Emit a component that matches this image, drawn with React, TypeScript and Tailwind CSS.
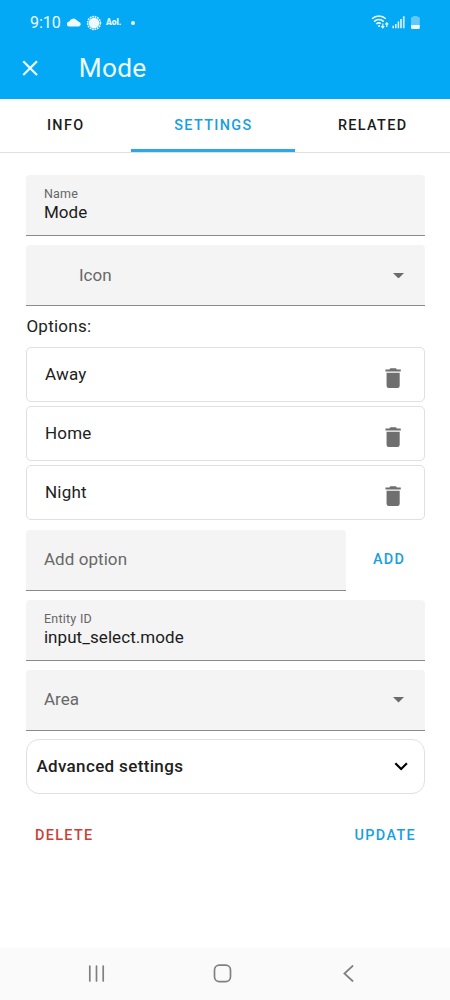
import React from 'react';
import { clsx } from 'clsx';

const options = ['Away', 'Home', 'Night'];

const tabs = [
  { label: 'INFO', width: 'w-[131.4px]', active: false },
  { label: 'SETTINGS', width: 'w-[164px]', active: true },
  { label: 'RELATED', width: 'w-[154.6px]', active: false },
];

function MdiIcon({ path, className }: { path: string; className?: string }) {
  return (
    <svg viewBox="0 0 24 24" className={clsx('size-[26.25px] shrink-0 fill-current', className)}>
      <path d={path} />
    </svg>
  );
}

const mdiClose = 'M19 6.41L17.59 5 12 10.59 6.41 5 5 6.41 10.59 12 5 17.59 6.41 19 12 13.41 17.59 19 19 17.59 13.41 12z';
const mdiDelete = 'M19 4h-3.5l-1-1h-5l-1 1H5v2h14M6 19a2 2 0 0 0 2 2h8a2 2 0 0 0 2-2V7H6v12z';
const mdiChevronDown = 'M7.41 8.58L12 13.17l4.59-4.59L18 10l-6 6-6-6 1.41-1.42z';

function StatusBar() {
  return (
    <div className="flex h-[45px] items-center pl-[30px] pr-[30px]">
      <span className="w-[37px] text-base leading-none">9:10</span>
      <svg className="h-[9px] w-[14px]" viewBox="0 0 14 9" fill="currentColor">
        <path d="M2.6 8.6a2.5 2.5 0 0 1-.4-5A4.4 4.4 0 0 1 9.9 2.4a3 3 0 0 1 1.7 1.3 2.5 2.5 0 0 1 .2 4.9z" />
      </svg>
      <svg className="ml-[5px] size-[16px]" viewBox="0 0 16 16">
        <circle cx="8" cy="8" r="5.3" fill="currentColor" />
        <circle cx="8" cy="8" r="6.4" fill="none" stroke="currentColor" strokeWidth="1.6" strokeDasharray="1.7 0.81" />
      </svg>
      <span className="ml-[4px] w-[16px] text-[8.5px] font-black leading-none">Aol.</span>
      <span className="ml-[9px] size-1 rounded-full bg-current" />
      <svg className="mb-px ml-auto h-[14px] w-[49px]" viewBox="0 0 49 14" fill="none" stroke="currentColor">
        <path d="M1 3.8a9.8 9.8 0 0 1 13.8 0M3.1 6.6a6.8 6.8 0 0 1 9.6 0M5.3 9a3.7 3.7 0 0 1 4.6-.4" strokeWidth="1.5" />
        <circle cx="8" cy="11" r="1" fill="currentColor" stroke="none" />
        <path d="M11.8 8.6v4M10.3 11.2l1.5 1.6 1.5-1.6M15.8 12v-4M14.3 9.4l1.5-1.6 1.5 1.6" strokeWidth="1.2" />
        <path d="M22.2 13.3v-2.6M24.8 13.3V9M27.4 13.3V6.6M30 13.3V4" strokeWidth="1.5" />
        <path d="M32.8 13.3V1.2" strokeWidth="1.8" strokeOpacity=".8" />
        <path d="M40 3.2q0-1.2 1.2-1.2h1V.9h4.4V2h1q1.2 0 1.2 1.2V10H40z" fill="currentColor" fillOpacity=".4" stroke="none" />
        <path d="M40 10h8.8v2.8q0 1.2-1.2 1.2h-6.4Q40 14 40 12.8z" fill="currentColor" stroke="none" />
      </svg>
    </div>
  );
}

function DropdownArrow() {
  return (
    <svg viewBox="0 0 10 5" className="mt-px mr-[21px] ml-auto h-[5.5px] w-[11px] shrink-0 fill-[#6b6b6b]">
      <path d="M0 0h10L5 5z" />
    </svg>
  );
}

type FieldProps = {
  label: string;
  value?: string;
  dropdown?: boolean;
  className?: string;
  labelClass?: string;
};

function Field({ label, value, dropdown, className, labelClass }: FieldProps) {
  return (
    <div
      className={clsx(
        'flex h-[61px] rounded-t-[4px] border-b border-[#8a8a8a] bg-[#f4f4f4] pl-[17.5px]',
        className,
      )}
    >
      {value ? (
        <div className="flex flex-col pt-[11px]">
          <span className="text-[12.5px] leading-4 tracking-[0.25px] text-[#666]">{label}</span>
          <span className="text-[17px] leading-[21px] tracking-[0.07px] text-[#1b1b1b]">{value}</span>
        </div>
      ) : (
        <div className="flex w-full items-center">
          <span className={clsx('pb-px text-[17px] leading-6 tracking-[0.07px] text-[#686868]', labelClass)}>{label}</span>
          {dropdown && <DropdownArrow />}
        </div>
      )}
    </div>
  );
}

function OptionRow({ name }: { name: string }) {
  return (
    <div className="flex h-[55px] items-center rounded-[5px] border border-[#e0e0e0] pl-[17.5px] pr-[17.5px]">
      <span className="flex-1 pb-[2px] text-[17px] leading-6 tracking-[0.25px] text-[#212121]">{name}</span>
      <MdiIcon path={mdiDelete} className="mt-[7px] text-[#6f6f6f]" />
    </div>
  );
}

export default function App() {
  return (
    <div className="flex h-[1000px] w-[450px] flex-col bg-white font-['Roboto',sans-serif] text-[#212121]">
      <header className="h-[99px] bg-[#03a9f4] text-[#effaff]">
        <StatusBar />
        <div className="flex h-[47px] items-center pl-[17px]">
          <MdiIcon path={mdiClose} />
          <h1 className="ml-[35.5px] pb-px text-[26.25px] leading-[26px] tracking-[0.3px]">Mode</h1>
        </div>
      </header>

      <nav className="flex h-[54px] border-b border-[#e0e0e0]">
        {tabs.map((tab) => (
          <button
            key={tab.label}
            className={clsx(
              'relative h-[53px] pt-px text-[14.4px] font-medium tracking-[1.35px]',
              tab.width,
              tab.active ? 'text-[#18a0e0]' : 'text-[#1b1b1b]',
            )}
          >
            {tab.label}
            {tab.active && <span className="absolute inset-x-0 bottom-0 h-[3px] bg-[#2ca8ea]" />}
          </button>
        ))}
      </nav>

      <main className="flex flex-col pl-[26.4px] pr-[25.4px] pt-[22px]">
        <Field label="Name" value="Mode" />
        <Field label="Icon" dropdown className="mt-[9px]" labelClass="ml-[35px]" />

        <p className="mt-[8px] text-[17px] leading-6 tracking-[0.25px]">Options:</p>
        <div className="mt-[9px] flex flex-col gap-1">
          {options.map((name) => (
            <OptionRow key={name} name={name} />
          ))}
        </div>

        <div className="mt-[9.5px] flex items-center">
          <Field label="Add option" className="w-[320px]" />
          <button className="ml-[26.5px] text-[14.4px] font-medium tracking-[1.35px] text-[#18a0e0]">ADD</button>
        </div>

        <Field label="Entity ID" value="input_select.mode" className="mt-[9px]" />
        <Field label="Area" dropdown className="mt-[9px]" />

        <div className="mt-[8.5px] flex h-[55px] items-center rounded-[13px] border border-[#e0e0e0] pl-[9px] pr-[9px]">
          <span className="flex-1 pb-[2px] text-[17px] font-medium leading-6 tracking-[0.35px]">Advanced settings</span>
          <MdiIcon path={mdiChevronDown} className="text-black" />
        </div>
      </main>

      <footer className="mt-[30px] flex justify-between pl-[35px] pr-[34px] text-[14.4px] font-medium leading-6 tracking-[1.35px]">
        <button className="text-[#cb4034]">DELETE</button>
        <button className="text-[#18a0e0]">UPDATE</button>
      </footer>

      <div className="mt-auto flex h-[52px] items-center bg-[#fafafa] pb-[2px] text-[#808080]">
        <svg className="ml-[87px] size-[19px]" viewBox="0 0 19 19" fill="none" stroke="currentColor" strokeWidth="1.7" strokeLinecap="round">
          <path d="M2.8 2v15M9.5 2v15M16.2 2v15" />
        </svg>
        <svg className="ml-[107px] size-[19px]" viewBox="0 0 19 19" fill="none" stroke="currentColor" strokeWidth="1.7">
          <rect x="1.5" y="1.2" width="16" height="16.4" rx="4.8" />
        </svg>
        <svg className="ml-[107px] size-[19px]" viewBox="0 0 19 19" fill="none" stroke="currentColor" strokeWidth="1.7" strokeLinecap="round">
          <path d="M13.6 2L5.4 9.5l8.2 7.5" />
        </svg>
      </div>
    </div>
  );
}
